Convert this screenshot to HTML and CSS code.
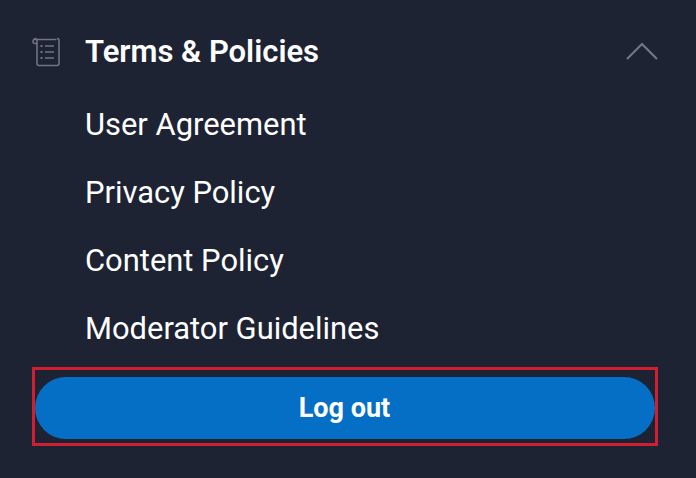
FILE: index.html
```html
<!DOCTYPE html>
<html lang="en">
<head>
<meta charset="utf-8">
<title>Terms &amp; Policies</title>
<link rel="stylesheet" href="styles.css">
</head>
<body>
<main class="menu">
  <header class="section-head">
    <svg class="list-icon" viewBox="0 0 28 30" fill="none" stroke="#6f7480" stroke-width="1.6" aria-hidden="true">
      <path d="M1 2.500h23.500M4.500 1.500C2.500 1.500 1 2.500 1 4.500c0 1 .8 2 2 2h2.500M5 2v24.500c0 1 .8 2 2 2h18c1 0 2-1 2-2V3.500c0-1-.8-2-2-2"/>
      <path d="M13 9h9M13 15h9M13 21h9"/>
      <path d="M8.500 9h2M8.500 15h2M8.500 21h2" stroke-width="2.200"/>
    </svg>
    <h2 class="section-title">Terms &amp; Policies</h2>
    <svg class="chevron" viewBox="0 0 32 18" fill="none" stroke="#727783" stroke-width="2.200" aria-hidden="true">
      <path d="M1 17 16 2l15 15"/>
    </svg>
  </header>
  <ul class="links">
    <li class="link">User Agreement</li>
    <li class="link">Privacy Policy</li>
    <li class="link">Content Policy</li>
    <li class="link">Moderator Guidelines</li>
  </ul>
  <div class="highlight">
    <button class="logout" type="button">Log out</button>
  </div>
</main>
</body>
</html>
```
FILE: styles.css
```css
html, body {
  margin: 0;
  height: 100%;
}
body {
  background: #1d2333;
  color: #fff;
  font-family: Roboto, "Liberation Sans", sans-serif;
  overflow: hidden;
}
.menu {
  display: flex;
  flex-direction: column;
  padding: 33px 38px 0 32px;
  width: 696px;
  height: 478px;
  box-sizing: border-box;
}
.section-head {
  display: flex;
  align-items: center;
  height: 38px;
}
.list-icon {
  width: 28px;
  height: 30px;
  flex: none;
}
.section-title {
  margin: 0 0 0 25px;
  font-size: 31px;
  font-weight: 600;
  line-height: 38px;
  flex: 1;
}
.chevron {
  width: 32px;
  height: 18px;
  flex: none;
  margin-bottom: 2px;
}
.links {
  list-style: none;
  margin: 20px 0 0;
  padding: 0 0 0 53px;
}
.link {
  font-size: 30.900px;
  line-height: 68px;
  height: 68px;
}
.highlight {
  box-sizing: border-box;
  width: 626px;
  height: 79px;
  margin-top: 4px;
  border: 3px solid #cf1f30;
  padding: 7px 0 0;
}
.logout {
  display: block;
  width: 100%;
  height: 62px;
  border: 0;
  border-radius: 31px;
  background: #046fc5;
  color: #fff;
  font: 700 27px Roboto, "Liberation Sans", sans-serif;
  padding: 0 1px 0 0;
}
```
